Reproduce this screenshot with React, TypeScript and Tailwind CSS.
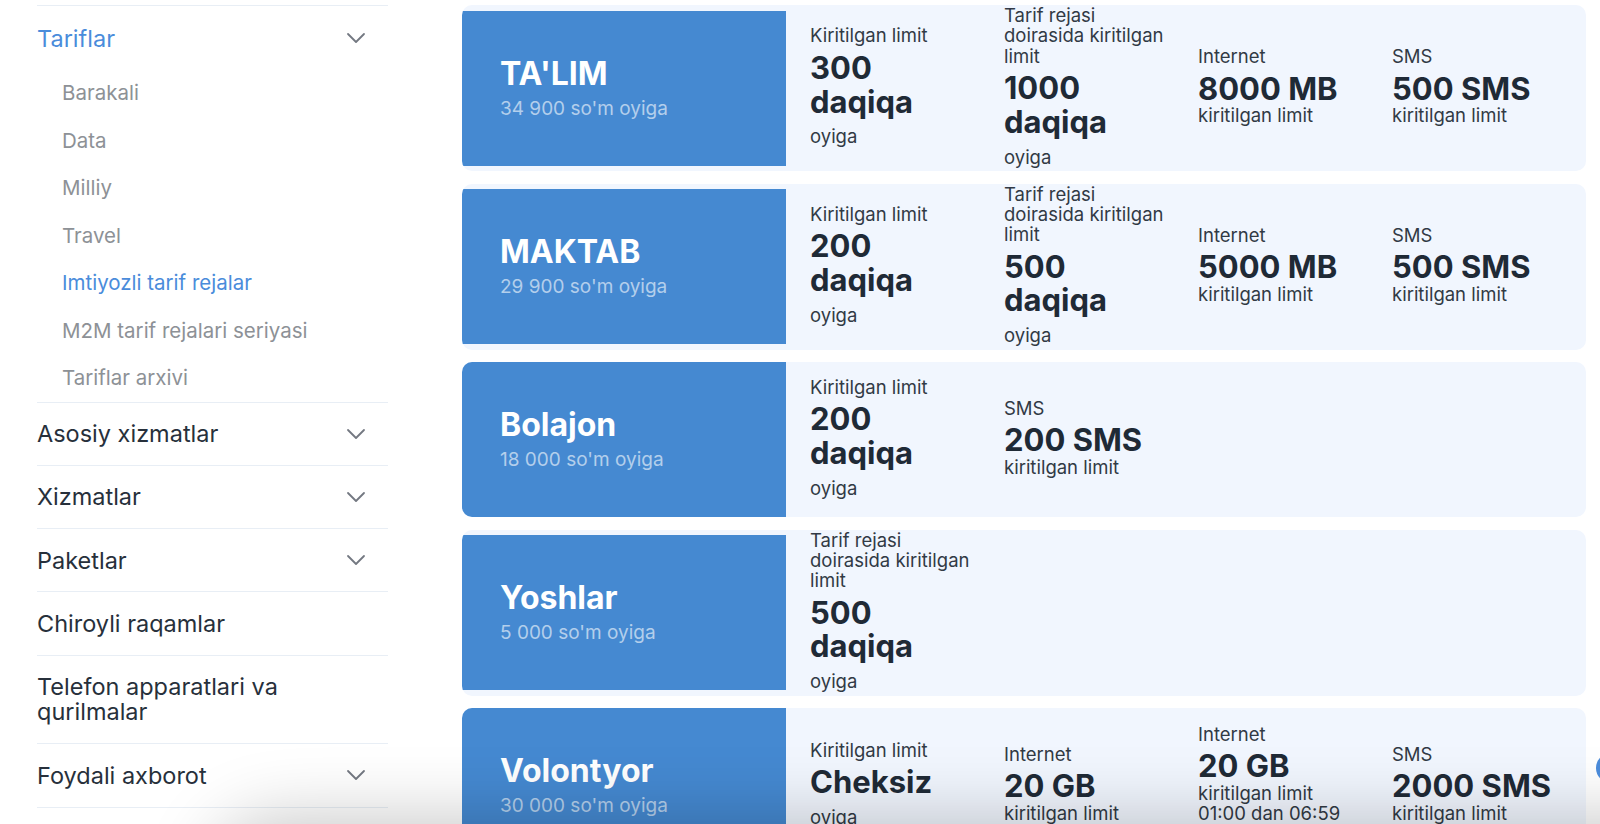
import React from 'react'

type Stat = {
  label: string[]
  value: string[]
  sub?: string[]
  note?: string
  spacer?: boolean
}

type Tariff = {
  name: string
  price: string
  stats: Stat[]
}

const TARIFFS: Tariff[] = [
  {
    name: "TA'LIM",
    price: "34 900 so'm oyiga",
    stats: [
      { label: ['Kiritilgan limit'], value: ['300', 'daqiqa'], note: 'oyiga' },
      { label: ['Tarif rejasi', 'doirasida kiritilgan', 'limit'], value: ['1000', 'daqiqa'], note: 'oyiga' },
      { label: ['Internet'], value: ['8000 MB'], sub: ['kiritilgan limit'] },
      { label: ['SMS'], value: ['500 SMS'], sub: ['kiritilgan limit'] },
    ],
  },
  {
    name: 'MAKTAB',
    price: "29 900 so'm oyiga",
    stats: [
      { label: ['Kiritilgan limit'], value: ['200', 'daqiqa'], note: 'oyiga' },
      { label: ['Tarif rejasi', 'doirasida kiritilgan', 'limit'], value: ['500', 'daqiqa'], note: 'oyiga' },
      { label: ['Internet'], value: ['5000 MB'], sub: ['kiritilgan limit'] },
      { label: ['SMS'], value: ['500 SMS'], sub: ['kiritilgan limit'] },
    ],
  },
  {
    name: 'Bolajon',
    price: "18 000 so'm oyiga",
    stats: [
      { label: ['Kiritilgan limit'], value: ['200', 'daqiqa'], note: 'oyiga' },
      { label: ['SMS'], value: ['200 SMS'], sub: ['kiritilgan limit'] },
    ],
  },
  {
    name: 'Yoshlar',
    price: "5 000 so'm oyiga",
    stats: [
      { label: ['Tarif rejasi', 'doirasida kiritilgan', 'limit'], value: ['500', 'daqiqa'], note: 'oyiga' },
    ],
  },
  {
    name: 'Volontyor',
    price: "30 000 so'm oyiga",
    stats: [
      { label: ['Kiritilgan limit'], value: ['Cheksiz'], note: 'oyiga' },
      { label: ['Internet'], value: ['20 GB'], sub: ['kiritilgan limit'] },
      { label: ['Internet'], value: ['20 GB'], sub: ['kiritilgan limit', '01:00 dan 06:59'], spacer: true },
      { label: ['SMS'], value: ['2000 SMS'], sub: ['kiritilgan limit'] },
    ],
  },
]

const SUB_ITEMS = [
  'Barakali',
  'Data',
  'Milliy',
  'Travel',
  'Imtiyozli tarif rejalar',
  'M2M tarif rejalari seriyasi',
  'Tariflar arxivi',
]

const MENU: { title: string[]; chevron: boolean }[] = [
  { title: ['Asosiy xizmatlar'], chevron: true },
  { title: ['Xizmatlar'], chevron: true },
  { title: ['Paketlar'], chevron: true },
  { title: ['Chiroyli raqamlar'], chevron: false },
  { title: ['Telefon apparatlari va', 'qurilmalar'], chevron: false },
  { title: ['Foydali axborot'], chevron: true },
]

function Chevron() {
  return (
    <svg width="20" height="12" viewBox="0 0 20 12" fill="none" className="shrink-0">
      <path d="M2 2 L10 10 L18 2" stroke="#737881" strokeWidth="1.8" strokeLinecap="round" strokeLinejoin="round" />
    </svg>
  )
}

function StatColumn({ stat }: { stat: Stat }) {
  return (
    <div className="w-[194px] shrink-0 text-[18.5px] leading-[20.4px] text-[#313a45]">
      {stat.label.map((l) => (
        <div key={l} className="whitespace-nowrap">{l}</div>
      ))}
      <div className="mt-[5px] text-[31px] font-bold leading-[33.7px] text-[#1f2a36]">
        {stat.value.map((v) => (
          <div key={v} className="whitespace-nowrap">{v}</div>
        ))}
      </div>
      {stat.sub?.map((s) => (
        <div key={s} className="whitespace-nowrap">{s}</div>
      ))}
      {stat.note && <div className="mt-[8px]">{stat.note}</div>}
      {stat.spacer && <div className="h-[20px]" />}
    </div>
  )
}

function TariffCard({ tariff }: { tariff: Tariff }) {
  return (
    <div className="flex min-h-[155px] items-center overflow-hidden rounded-[10px] bg-[#f1f6fe]">
      <div className="flex h-[155px] w-[324px] shrink-0 flex-col justify-center bg-[#4589d1] pl-[38px]">
        <div className="text-[32px] font-bold leading-[36px] text-white">{tariff.name}</div>
        <div className="mt-[5px] text-[19px] leading-[24px] text-white/60">{tariff.price}</div>
      </div>
      <div className="flex items-center pb-[4px] pl-[24px]">
        {tariff.stats.map((s, i) => (
          <StatColumn key={i} stat={s} />
        ))}
      </div>
    </div>
  )
}

export default function App() {
  return (
    <div
      className="relative flex h-[824px] w-[1600px] overflow-hidden bg-white"
      style={{ fontFamily: 'Inter, "Noto Sans", sans-serif' }}
    >
      {/* sidebar */}
      <aside className="w-[388px] shrink-0 pl-[37px] pt-[5px]">
        <div className="border-t border-[#e8eef5]">
          <div className="flex items-center justify-between pb-[18.5px] pr-[22px] pt-[19.5px] text-[23.5px] leading-[25px] text-[#4a8cdb]">
            <span>Tariflar</span>
            <Chevron />
          </div>
          <ul className="pl-[25px]">
            {SUB_ITEMS.map((item) => (
              <li
                key={item}
                className={
                  item === 'Imtiyozli tarif rejalar'
                    ? 'py-[12px] text-[20.5px] leading-[23.5px] text-[#4a8cdb]'
                    : 'py-[12px] text-[20.5px] leading-[23.5px] text-[#8d9196]'
                }
              >
                {item}
              </li>
            ))}
          </ul>
        </div>
        {MENU.map((m) => (
          <div
            key={m.title[0]}
            className="flex items-center justify-between border-t border-[#e8eef5] py-[18.5px] pr-[22px] text-[23.5px] leading-[25.3px] text-[#27303b]"
          >
            <span>
              {m.title.map((t) => (
                <span key={t} className="block">{t}</span>
              ))}
            </span>
            {m.chevron && <Chevron />}
          </div>
        ))}
        <div className="border-t border-[#e8eef5]" />
      </aside>

      {/* tariffs */}
      <main className="flex-1 pl-[74px] pr-[14px] pt-[5px]">
        <div className="flex flex-col gap-[12.5px]">
          {TARIFFS.map((t) => (
            <TariffCard key={t.name} tariff={t} />
          ))}
        </div>
      </main>

      {/* bottom shadow from element below the fold */}
      <div className="pointer-events-none absolute left-[220px] right-[-200px] top-[828px] h-[120px] rounded-[60px] shadow-[0_0_70px_10px_rgba(0,0,0,0.22)]" />

      {/* floating button peeking from the right edge */}
      <div className="absolute left-[1596px] top-[753px] h-[30px] w-[30px] rounded-full bg-[#4a8ad8]" />
    </div>
  )
}
